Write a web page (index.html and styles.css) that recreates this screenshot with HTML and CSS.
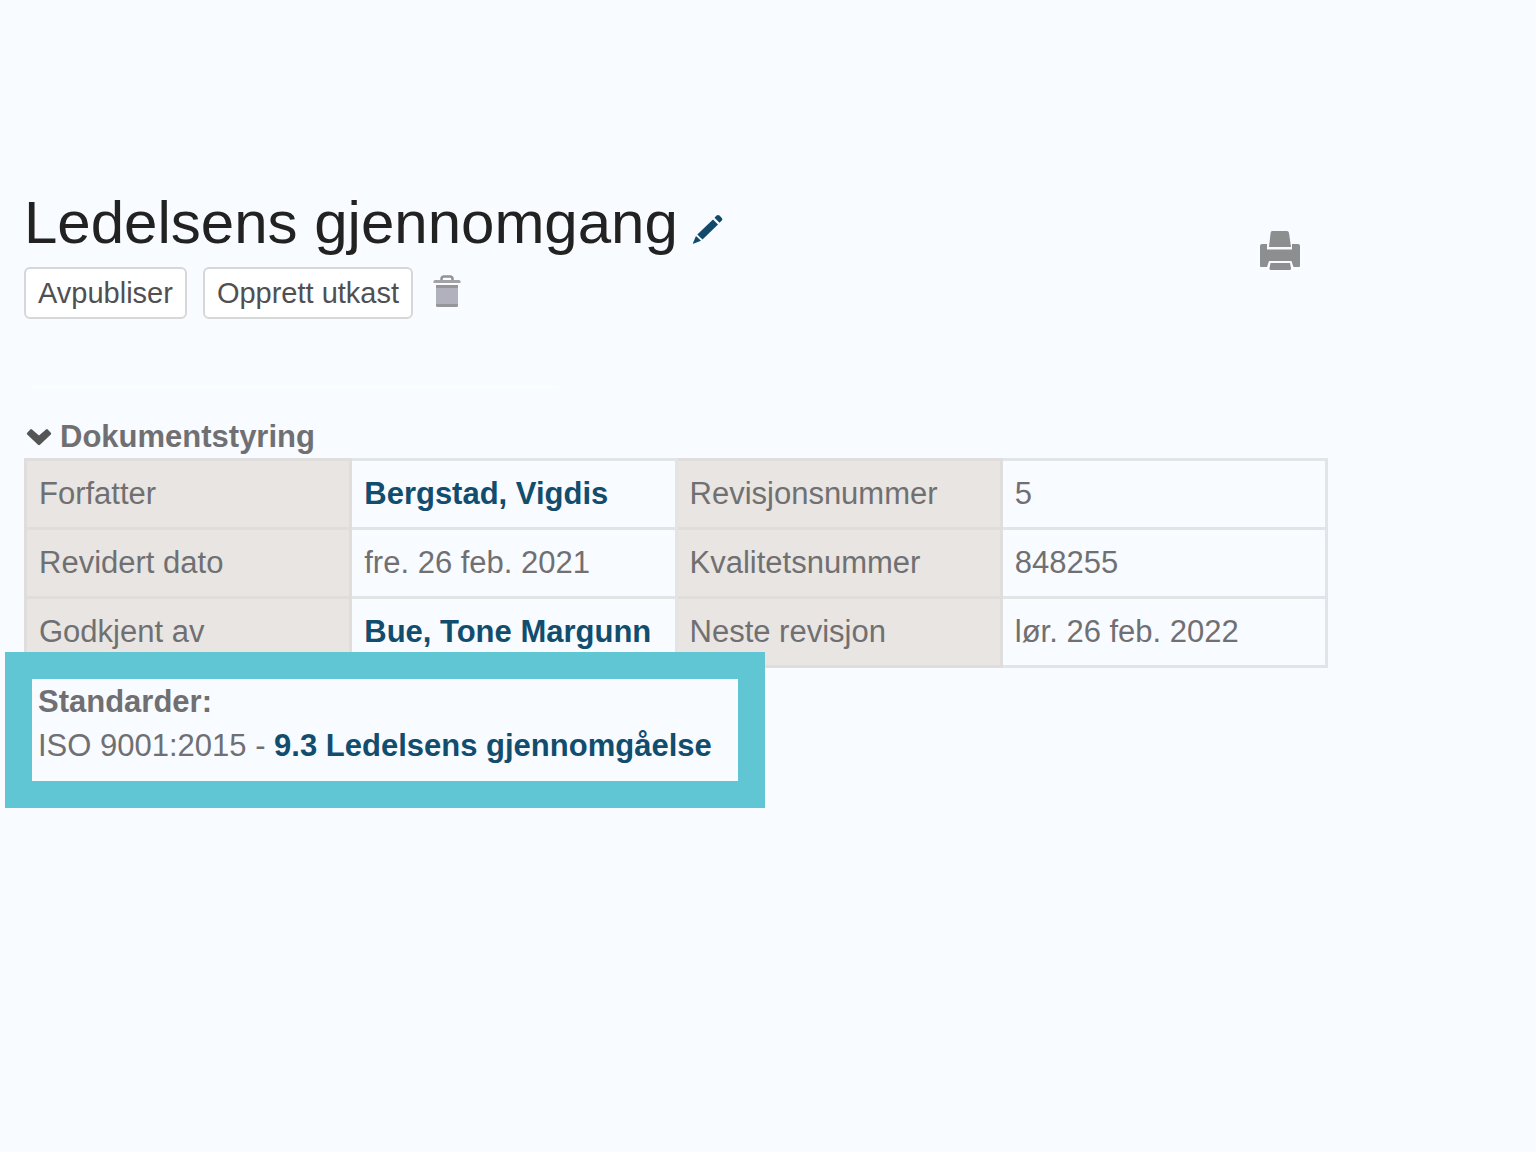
FILE: index.html
```html
<!DOCTYPE html>
<html lang="nb">
<head>
<meta charset="utf-8">
<meta name="viewport" content="width=device-width, initial-scale=1">
<title>Ledelsens gjennomgang</title>
<link rel="stylesheet" href="styles.css">
</head>
<body>
<main class="document">
  <header class="document-header">
    <div class="heading">
      <h1 class="title">Ledelsens gjennomgang</h1>
      <button class="icon-button edit" type="button" aria-label="Rediger tittel">
        <svg width="32" height="32" viewBox="0 0 32 32" fill="#10496a" aria-hidden="true">
          <path d="M22.500 3.800L24.600 1.600Q26 .4 27.500 1.600L29.800 3.900Q31 5.200 29.800 6.600L27.500 8.800Z"/>
          <path d="M21 5.400L26 10.400L10.500 25.600L5.300 20.500Z"/>
          <path d="M4 21.900L9 26.800L1.300 29.700Q.7 29.800 1 29Z"/>
        </svg>
      </button>
    </div>
    <button class="icon-button print" type="button" aria-label="Skriv ut">
      <svg width="42" height="40" viewBox="0 0 42 40" fill="#8d8e90" aria-hidden="true">
        <path d="M13 0H28Q29.500 0 30 2L32 16H10L11.600 2Q12 0 13 0Z"/>
        <path d="M1 15Q1 13 3 13H8V18.500H33V13H39Q41 13 41 15V35Q41 36 40 36H34.500L32.500 30H10L8 36H2Q1 36 1 35Z"/>
        <path d="M11.500 32H31L32 37.500Q32 39 30.500 39H12Q10.500 39 10.500 37.500Z"/>
      </svg>
    </button>
  </header>

  <div class="actions">
    <button class="button" type="button">Avpubliser</button>
    <button class="button" type="button">Opprett utkast</button>
    <button class="icon-button delete" type="button" aria-label="Slett">
      <svg width="28" height="33" viewBox="0 0 28 33" aria-hidden="true">
        <path d="M8.500 5V4Q8.500 1.500 11 1.500H17Q19.500 1.500 19.500 4V5" fill="none" stroke="#929397" stroke-width="2.500"/>
        <path d="M2 5H26Q27.500 5 27.500 6.500V8H.5V6.500Q.5 5 2 5Z" fill="#a3a3a5"/>
        <path d="M3 11H25V30Q25 32 23 32H5Q3 32 3 30Z" fill="#b1b1bd"/>
        <path d="M3 10H25V13H3ZM3 29H25V30.500Q25 32 23 32H5Q3 32 3 30.500Z" fill="#969699"/>
      </svg>
    </button>
  </div>

  <hr class="divider">

  <section>
    <h2 class="section-title">
      <svg width="26" height="18" viewBox="0 0 26 18" fill="#555" aria-hidden="true"><path d="M1 5L4.500 1.200Q5.200.7 6 1.400L13 7.500L20 1.400Q20.800.7 21.500 1.200L25 5Q25.500 5.700 24.800 6.500L14 16.800Q13 17.600 12 16.800L1.200 6.500Q.5 5.700 1 5Z"/></svg>
      Dokumentstyring
    </h2>
    <table class="details">
      <tbody>
        <tr>
          <th scope="row">Forfatter</th><td><a href="#">Bergstad, Vigdis</a></td>
          <th scope="row">Revisjonsnummer</th><td>5</td>
        </tr>
        <tr>
          <th scope="row">Revidert dato</th><td>fre. 26 feb. 2021</td>
          <th scope="row">Kvalitetsnummer</th><td>848255</td>
        </tr>
        <tr>
          <th scope="row">Godkjent av</th><td><a href="#">Bue, Tone Margunn</a></td>
          <th scope="row">Neste revisjon</th><td>lør. 26 feb. 2022</td>
        </tr>
      </tbody>
    </table>
  </section>

  <section class="standards">
    <h3 class="standards-title">Standarder:</h3>
    <p class="standards-item">ISO 9001:2015 - <a href="#">9.3 Ledelsens gjennomgåelse</a></p>
  </section>
</main>
</body>
</html>
```
FILE: styles.css
```css
* {
  box-sizing: border-box;
}

body {
  margin: 0;
  background: #f8fbff;
  color: #707072;
  font: 31px/36px "Liberation Sans", Arial, sans-serif;
}

h1, h2, h3, p {
  margin: 0;
}

a {
  color: #124d6e;
  font-weight: bold;
  text-decoration: none;
}

.document {
  padding: 188px 208px 24px 24px;
}

.document-header {
  display: flex;
  align-items: center;
  justify-content: space-between;
  padding-right: 27px;
}

.heading {
  display: flex;
  align-items: center;
  gap: 14px;
}

.title {
  color: #222;
  font-size: 60px;
  font-weight: normal;
  line-height: 70px;
}

.icon-button {
  display: flex;
  padding: 0;
  border: 0;
  background: none;
  cursor: pointer;
}

.edit {
  padding-top: 14px;
}

.print {
  padding-top: 43px;
  margin-bottom: -13px;
}

.actions {
  display: flex;
  align-items: center;
  gap: 16px;
  margin-top: 9px;
}

.button {
  height: 52px;
  padding: 0 12px;
  border: 2px solid #d6d7d9;
  border-radius: 6px;
  background: #fff;
  color: #505052;
  font: inherit;
  font-size: 29px;
  cursor: pointer;
}

.delete {
  padding-bottom: 4px;
  margin-left: 4px;
}

.divider {
  height: 2px;
  margin: 67px 59% 31px 8px;
  border: 0;
  background: #fdfdfe;
}

.section-title {
  display: flex;
  align-items: center;
  gap: 8px;
  margin-bottom: 3px;
  padding-left: 2px;
  font-size: 31px;
}

.details {
  width: 100%;
  border-collapse: collapse;
  table-layout: fixed;
}

.details th,
.details td {
  height: 69px;
  padding: 0 12px;
  border: 3px solid #e3e4e5;
  text-align: left;
  white-space: nowrap;
}

.details th {
  border-color: #dfdedd;
  background: #e8e5e2;
  font-weight: normal;
}

/* The frame overlaps the lower edge of the table. */
.standards {
  position: relative;
  width: fit-content;
  margin: -16px 0 0 -19px;
  padding: 5px 26px 17px 6px;
  border: 27px solid #60c6d4;
  background: #f8fbff;
}

.standards-title {
  font-size: 31px;
}

.standards-item {
  margin-top: 8px;
}
```
